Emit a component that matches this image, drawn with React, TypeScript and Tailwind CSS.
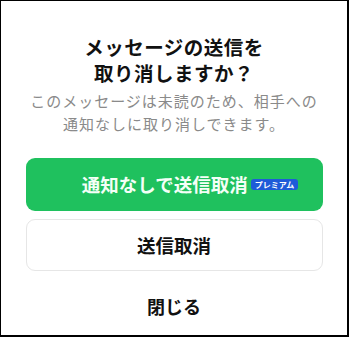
export default function App() {
  return (
    <div className="w-[350px] h-[338px] bg-white">
      <div
        className="w-[349px] h-[337px] box-border border-l border-t border-r-2 border-b-2 border-black bg-white flex flex-col items-center"
        style={{ fontFamily: '"Noto Sans CJK JP", "Noto Sans", sans-serif' }}
      >
        <h1 className="mt-[33px] text-center text-[19.5px] font-bold text-[#111] tracking-[0.5px]">
          <span className="block leading-[26px]">メッセージの送信を</span>
          <span className="block leading-[26px]">取り消しますか？</span>
        </h1>
        <p className="mt-[3px] text-center text-[15px] leading-[23px] text-[#8a8a8a] tracking-[1px]">
          このメッセージは未読のため、相手への
          <br />
          通知なしに取り消しできます。
        </p>
        <button className="mt-[23px] w-[297px] h-[53px] shrink-0 rounded-[9px] bg-[#1fc15e] flex items-center justify-center gap-[3px] pl-[32px]">
          <span className="text-[18.5px] font-bold text-[#f4fff7] leading-none">
            通知なしで送信取消
          </span>
          <span className="h-[11px] px-[4px] rounded-[3px] bg-[#1e5bd8] text-white text-[8px] font-bold leading-[11px]">
            プレミアム
          </span>
        </button>
        <button className="mt-[8px] w-[297px] h-[52px] shrink-0 rounded-[9px] bg-white border border-[#e6e6e6] flex items-center justify-center">
          <span className="text-[18.5px] font-bold text-[#111] leading-none">送信取消</span>
        </button>
        <div className="mt-[23px] text-[18px] font-bold text-[#111] leading-[24px]">閉じる</div>
      </div>
    </div>
  );
}
